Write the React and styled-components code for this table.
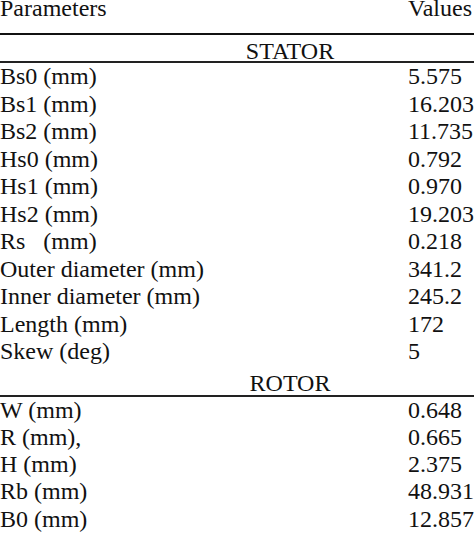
import React from "react";
import styled, { createGlobalStyle } from "styled-components";

const GlobalStyle = createGlobalStyle`
  html, body {
    margin: 0;
    padding: 0;
    background: #ffffff;
    overflow: hidden;
  }
`;

const Table = styled.div`
  width: 580px;
  font-family: "Liberation Serif", "Times New Roman", serif;
  font-size: 24px;
  color: #111;
`;

const HeaderRow = styled.div`
  display: flex;
  height: 33px;
  line-height: 16px;
  border-bottom: 2px solid #111;
`;

const SectionRow = styled.div`
  height: ${(p) => p.$height}px;
  box-sizing: border-box;
  padding-top: ${(p) => p.$pad}px;
  line-height: ${(p) => p.$height - p.$pad}px;
  text-align: center;
  border-bottom: 2px solid #222;
`;

const Row = styled.div`
  display: flex;
  height: ${(p) => p.$pitch}px;
  line-height: ${(p) => p.$pitch}px;
`;

const Label = styled.div`
  width: 408px;
  flex: none;
  white-space: pre;
`;

const Value = styled.div`
  flex: 1;
  white-space: nowrap;
`;

const stator = [
  ["Bs0 (mm)", "5.575"],
  ["Bs1 (mm)", "16.203"],
  ["Bs2 (mm)", "11.735"],
  ["Hs0 (mm)", "0.792"],
  ["Hs1 (mm)", "0.970"],
  ["Hs2 (mm)", "19.203"],
  ["Rs   (mm)", "0.218"],
  ["Outer diameter (mm)", "341.2"],
  ["Inner diameter (mm)", "245.2"],
  ["Length (mm)", "172"],
  ["Skew (deg)", "5"],
];

const rotor = [
  ["W (mm)", "0.648"],
  ["R (mm),", "0.665"],
  ["H (mm)", "2.375"],
  ["Rb (mm)", "48.931"],
  ["B0 (mm)", "12.857"],
];

const App = () => (
  <>
    <GlobalStyle />
    <Table>
      <HeaderRow>
        <Label>Parameters</Label>
        <Value>Values</Value>
      </HeaderRow>
      <SectionRow $height={28.3} $pad={4}>
        STATOR
      </SectionRow>
      {stator.map(([name, value]) => (
        <Row key={name} $pitch={27.5}>
          <Label>{name}</Label>
          <Value>{value}</Value>
        </Row>
      ))}
      <SectionRow $height={30.8} $pad={4}>
        ROTOR
      </SectionRow>
      {rotor.map(([name, value]) => (
        <Row key={name} $pitch={27.3}>
          <Label>{name}</Label>
          <Value>{value}</Value>
        </Row>
      ))}
    </Table>
  </>
);

export default App;
